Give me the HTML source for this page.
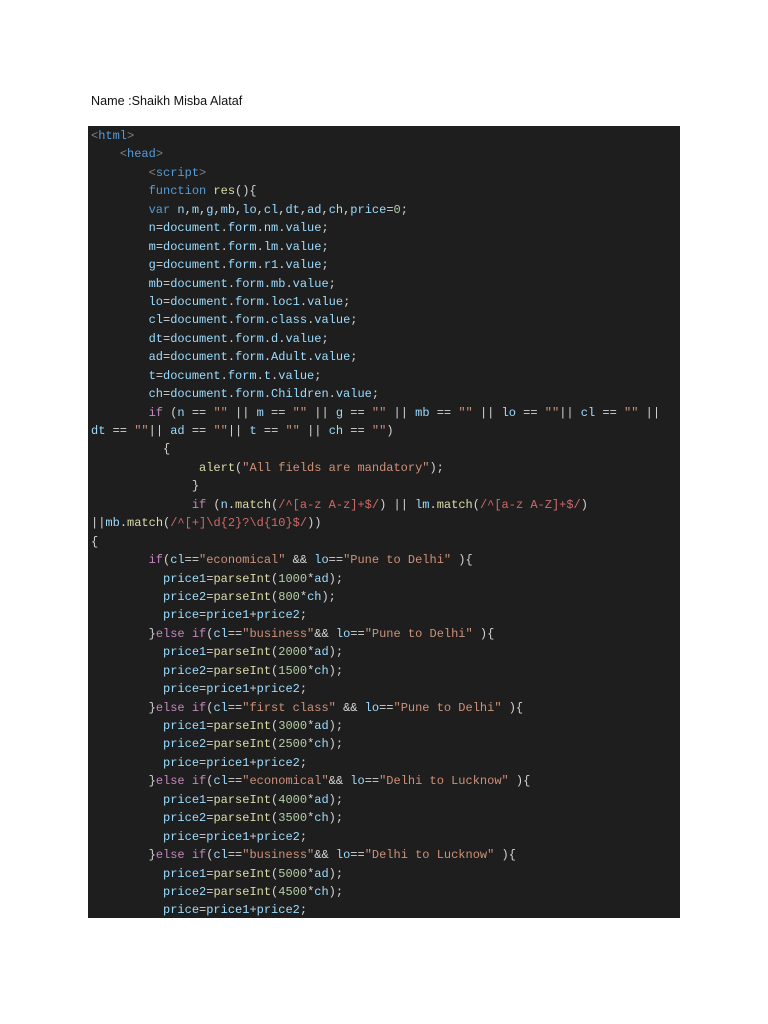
<!DOCTYPE html>
<html><head><meta charset="utf-8"><style>
body{margin:0;background:#fff;width:768px;height:1024px;position:relative;overflow:hidden}
.name{position:absolute;left:91px;top:94px;font:12.6px "Liberation Sans",sans-serif;color:#111}
.box{position:absolute;left:88px;top:126px;width:592px;height:792px;background:#1e1e1e;overflow:hidden}
pre{margin:0;padding:1px 0 0 3px;font:12px/18.43px "Liberation Mono",monospace;color:#d4d4d4;white-space:pre}
.k{color:#569cd6}.v{color:#9cdcfe}.f{color:#dcdcaa}.s{color:#ce9178}.c{color:#c586c0}.n{color:#b5cea8}.g{color:#808080}.r{color:#d16969}
</style></head><body>
<div class="name">Name :Shaikh Misba Alataf</div>
<div class="box"><pre><span class="g">&lt;</span><span class="k">html</span><span class="g">&gt;</span>
    <span class="g">&lt;</span><span class="k">head</span><span class="g">&gt;</span>
        <span class="g">&lt;</span><span class="k">script</span><span class="g">&gt;</span>
        <span class="k">function</span> <span class="f">res</span>(){
        <span class="k">var</span> <span class="v">n</span>,<span class="v">m</span>,<span class="v">g</span>,<span class="v">mb</span>,<span class="v">lo</span>,<span class="v">cl</span>,<span class="v">dt</span>,<span class="v">ad</span>,<span class="v">ch</span>,<span class="v">price</span>=<span class="n">0</span>;
        <span class="v">n</span>=<span class="v">document</span>.<span class="v">form</span>.<span class="v">nm</span>.<span class="v">value</span>;
        <span class="v">m</span>=<span class="v">document</span>.<span class="v">form</span>.<span class="v">lm</span>.<span class="v">value</span>;
        <span class="v">g</span>=<span class="v">document</span>.<span class="v">form</span>.<span class="v">r1</span>.<span class="v">value</span>;
        <span class="v">mb</span>=<span class="v">document</span>.<span class="v">form</span>.<span class="v">mb</span>.<span class="v">value</span>;
        <span class="v">lo</span>=<span class="v">document</span>.<span class="v">form</span>.<span class="v">loc1</span>.<span class="v">value</span>;
        <span class="v">cl</span>=<span class="v">document</span>.<span class="v">form</span>.<span class="v">class</span>.<span class="v">value</span>;
        <span class="v">dt</span>=<span class="v">document</span>.<span class="v">form</span>.<span class="v">d</span>.<span class="v">value</span>;
        <span class="v">ad</span>=<span class="v">document</span>.<span class="v">form</span>.<span class="v">Adult</span>.<span class="v">value</span>;
        <span class="v">t</span>=<span class="v">document</span>.<span class="v">form</span>.<span class="v">t</span>.<span class="v">value</span>;
        <span class="v">ch</span>=<span class="v">document</span>.<span class="v">form</span>.<span class="v">Children</span>.<span class="v">value</span>;
        <span class="c">if</span> (<span class="v">n</span> == <span class="s">""</span> || <span class="v">m</span> == <span class="s">""</span> || <span class="v">g</span> == <span class="s">""</span> || <span class="v">mb</span> == <span class="s">""</span> || <span class="v">lo</span> == <span class="s">""</span>|| <span class="v">cl</span> == <span class="s">""</span> ||
<span class="v">dt</span> == <span class="s">""</span>|| <span class="v">ad</span> == <span class="s">""</span>|| <span class="v">t</span> == <span class="s">""</span> || <span class="v">ch</span> == <span class="s">""</span>)
          {
               <span class="f">alert</span>(<span class="s">"All fields are mandatory"</span>);
              }
              <span class="c">if</span> (<span class="v">n</span>.<span class="f">match</span>(<span class="r">/^[a-z A-z]+$/</span>) || <span class="v">lm</span>.<span class="f">match</span>(<span class="r">/^[a-z A-Z]+$/</span>)
||<span class="v">mb</span>.<span class="f">match</span>(<span class="r">/^[+]\d{2}?\d{10}$/</span>))
{
        <span class="c">if</span>(<span class="v">cl</span>==<span class="s">"economical"</span> &amp;&amp; <span class="v">lo</span>==<span class="s">"Pune to Delhi"</span> ){
          <span class="v">price1</span>=<span class="f">parseInt</span>(<span class="n">1000</span>*<span class="v">ad</span>);
          <span class="v">price2</span>=<span class="f">parseInt</span>(<span class="n">800</span>*<span class="v">ch</span>);
          <span class="v">price</span>=<span class="v">price1</span>+<span class="v">price2</span>;
        }<span class="c">else if</span>(<span class="v">cl</span>==<span class="s">"business"</span>&amp;&amp; <span class="v">lo</span>==<span class="s">"Pune to Delhi"</span> ){
          <span class="v">price1</span>=<span class="f">parseInt</span>(<span class="n">2000</span>*<span class="v">ad</span>);
          <span class="v">price2</span>=<span class="f">parseInt</span>(<span class="n">1500</span>*<span class="v">ch</span>);
          <span class="v">price</span>=<span class="v">price1</span>+<span class="v">price2</span>;
        }<span class="c">else if</span>(<span class="v">cl</span>==<span class="s">"first class"</span> &amp;&amp; <span class="v">lo</span>==<span class="s">"Pune to Delhi"</span> ){
          <span class="v">price1</span>=<span class="f">parseInt</span>(<span class="n">3000</span>*<span class="v">ad</span>);
          <span class="v">price2</span>=<span class="f">parseInt</span>(<span class="n">2500</span>*<span class="v">ch</span>);
          <span class="v">price</span>=<span class="v">price1</span>+<span class="v">price2</span>;
        }<span class="c">else if</span>(<span class="v">cl</span>==<span class="s">"economical"</span>&amp;&amp; <span class="v">lo</span>==<span class="s">"Delhi to Lucknow"</span> ){
          <span class="v">price1</span>=<span class="f">parseInt</span>(<span class="n">4000</span>*<span class="v">ad</span>);
          <span class="v">price2</span>=<span class="f">parseInt</span>(<span class="n">3500</span>*<span class="v">ch</span>);
          <span class="v">price</span>=<span class="v">price1</span>+<span class="v">price2</span>;
        }<span class="c">else if</span>(<span class="v">cl</span>==<span class="s">"business"</span>&amp;&amp; <span class="v">lo</span>==<span class="s">"Delhi to Lucknow"</span> ){
          <span class="v">price1</span>=<span class="f">parseInt</span>(<span class="n">5000</span>*<span class="v">ad</span>);
          <span class="v">price2</span>=<span class="f">parseInt</span>(<span class="n">4500</span>*<span class="v">ch</span>);
          <span class="v">price</span>=<span class="v">price1</span>+<span class="v">price2</span>;</pre></div>
</body></html>
